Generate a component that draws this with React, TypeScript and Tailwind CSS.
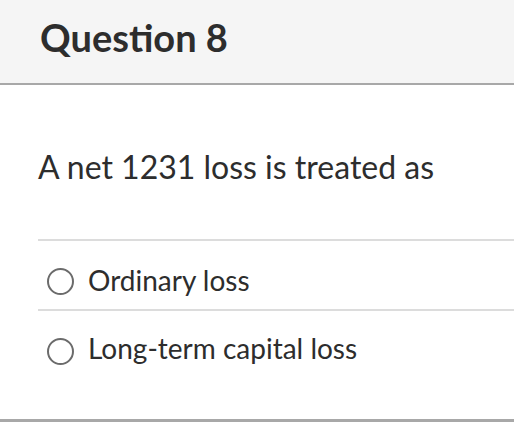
export default function App() {
  return (
    <div className="w-[514px] h-[422px] bg-white overflow-hidden" style={{ fontFamily: 'Lato, "Noto Sans", sans-serif' }}>
      <div className="h-[85px] bg-[#f5f5f5] border-b-2 border-[#a8a8a8] pl-[40px] pt-[18px]">
        <h2 className="text-[38px] font-bold text-[#2d2d2d] leading-[38px]">Question 8</h2>
      </div>
      <div className="h-[337px] border-b-[3px] border-[#a8a8a8] pl-[38px]">
        <div className="pt-[63px] h-[154px] text-[32px] leading-[38px] text-[#2d2d2d]">A net 1231 loss is treated as</div>
        <div className="border-t-2 border-[#dcdcdc]">
          <div className="h-[68px] flex items-start pl-[9px] pt-[27px]">
            <span className="w-[27px] h-[27px] rounded-full border-2 border-[#6b6b6b] shrink-0" />
            <span className="ml-[14px] -mt-[5px] text-[28px] leading-[34px] text-[#2d2d2d]">Ordinary loss</span>
          </div>
        </div>
        <div className="border-t-2 border-[#dcdcdc]">
          <div className="flex items-start pl-[9px] pt-[27px]">
            <span className="w-[27px] h-[27px] rounded-full border-2 border-[#6b6b6b] shrink-0" />
            <span className="ml-[14px] -mt-[7px] text-[28px] leading-[34px] text-[#2d2d2d]">Long-term capital loss</span>
          </div>
        </div>
      </div>
    </div>
  );
}
